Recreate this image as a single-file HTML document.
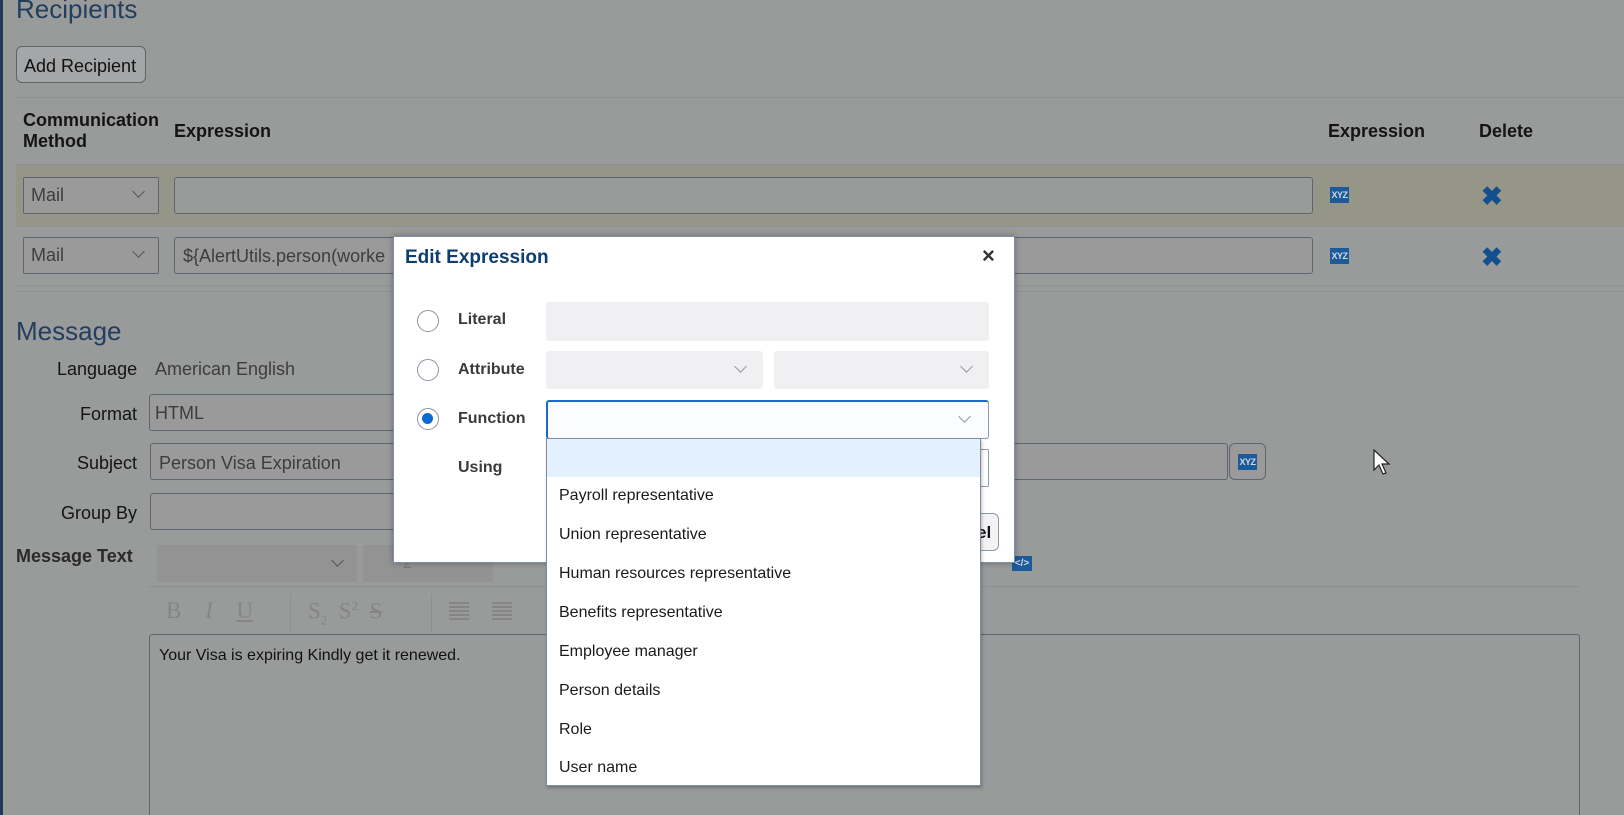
<!DOCTYPE html>
<html><head><meta charset="utf-8"><style>
*{box-sizing:border-box;margin:0;padding:0}
html,body{width:1624px;height:815px;overflow:hidden}
body{background:#999a9a;font-family:"Liberation Sans",Arial,sans-serif;position:relative;color:#111}
.a{position:absolute}
.lbl{font-size:18px;color:#141414}
.inp{position:absolute;border:1px solid #5d6670;border-radius:3px;background:#9a9a9a}
.sel{position:absolute;border:1px solid #5d6670;border-radius:2px;background:#9a9a9a;font-size:18px;color:#3d3d3d;padding:7px 0 0 7px}
.chev{position:absolute;width:9px;height:9px;border-right:1.5px solid #555;border-bottom:1.5px solid #555;transform:rotate(45deg)}
.xyz{position:absolute;width:19px;height:16px;background:#1d5a9a;color:#cfd8e6;font-size:9px;font-weight:bold;text-align:center;line-height:16px;letter-spacing:-0.5px}
.del{position:absolute;font-size:26px;font-weight:bold;color:#124f8e;line-height:1}
.dlg{position:absolute;left:393px;top:236px;width:622px;height:327px;background:#fff;border:1px solid #7a8ea6;box-shadow:0 0 6px rgba(0,0,0,.3)}
.rad{position:absolute;width:22px;height:22px;border:1.5px solid #8a96a3;border-radius:50%;background:#fff}
.dl{position:absolute;font-size:16px;font-weight:bold;color:#3b3b3b}
.gf{position:absolute;background:#f0f0f2;border-radius:3px}
.item{position:absolute;left:12px;font-size:16px;color:#1a1a1a}
</style></head><body>
<div class="a" style="left:0;top:0;width:3px;height:815px;background:#1f3a5a"></div>
<div class="a" style="left:16px;top:-6px;font-size:26px;color:#233f5f">Recipients</div>
<div class="a" style="left:16px;top:46px;width:130px;height:37px;border:1px solid #5f646a;border-radius:6px;background:#a5a6a7;font-size:18px;padding:9px 0 0 7px;color:#111">Add Recipient</div>
<div class="a" style="left:16px;top:97px;width:1608px;height:1px;background:#8a9097"></div>
<div class="a lbl" style="left:23px;top:110px;font-weight:bold;line-height:21px">Communication<br>Method</div>
<div class="a lbl" style="left:174px;top:121px;font-weight:bold">Expression</div>
<div class="a lbl" style="left:1328px;top:121px;font-weight:bold">Expression</div>
<div class="a lbl" style="left:1479px;top:121px;font-weight:bold">Delete</div>
<div class="a" style="left:16px;top:164px;width:1608px;height:62px;background:#959588;border-top:1px solid #8a9097"></div>
<div class="sel" style="left:23px;top:177px;width:136px;height:37px">Mail<div class="chev" style="left:110px;top:9px"></div></div>
<div class="inp" style="left:174px;top:177px;width:1139px;height:37px;background:#999a9a"></div>
<div class="xyz" style="left:1330px;top:187px">XYZ</div>
<div class="del" style="left:1481px;top:183px">✖</div>
<div class="a" style="left:16px;top:226px;width:1608px;height:1px;background:#8e9399"></div>
<div class="sel" style="left:23px;top:237px;width:136px;height:37px">Mail<div class="chev" style="left:110px;top:9px"></div></div>
<div class="inp" style="left:174px;top:237px;width:1139px;height:37px;font-size:18px;color:#3d3d3d;padding:8px 0 0 8px">${AlertUtils.person(worke</div>
<div class="xyz" style="left:1330px;top:248px">XYZ</div>
<div class="del" style="left:1481px;top:244px">✖</div>
<div class="a" style="left:16px;top:285px;width:1608px;height:1px;background:#8e9399"></div>
<div class="a" style="left:16px;top:291px;width:1608px;height:1px;background:#8e9399"></div>
<div class="a" style="left:16px;top:316px;font-size:26px;color:#233f5f">Message</div>
<div class="a lbl" style="left:57px;top:359px">Language</div>
<div class="a" style="left:155px;top:359px;font-size:18px;color:#3d3d3d">American English</div>
<div class="a lbl" style="left:80px;top:404px">Format</div>
<div class="inp" style="left:149px;top:394px;width:260px;height:37px;font-size:18px;color:#3d3d3d;padding:8px 0 0 5px">HTML</div>
<div class="a lbl" style="left:77px;top:453px">Subject</div>
<div class="inp" style="left:150px;top:443px;width:1078px;height:37px;font-size:18px;color:#3d3d3d;padding:9px 0 0 8px">Person Visa Expiration</div>
<div class="a" style="left:1229px;top:443px;width:37px;height:37px;border:1px solid #5d6670;border-radius:6px;background:#9a9a9a"><div class="xyz" style="left:8px;top:10px">XYZ</div></div>
<div class="a lbl" style="left:61px;top:503px">Group By</div>
<div class="inp" style="left:150px;top:493px;width:260px;height:37px"></div>
<div class="a lbl" style="left:16px;top:546px;font-weight:bold;color:#2a2a2a">Message Text</div>
<div class="a" style="left:157px;top:545px;width:200px;height:37px;background:#939393;border-radius:2px"><div class="chev" style="left:176px;top:11px;border-color:#555"></div></div>
<div class="a" style="left:363px;top:545px;width:130px;height:37px;background:#939393;border-radius:2px;color:#777;font-size:16px;padding:10px 0 0 40px">2</div>
<div class="a" style="left:149px;top:586px;width:1431px;height:1px;background:#8a9097"></div>
<div class="a" style="left:166px;top:598px;font-size:23px;color:#858585;font-family:'Liberation Serif',serif;word-spacing:18px">B <i>I</i> <u>U</u></div>
<div class="a" style="left:290px;top:594px;width:1px;height:38px;background:#8a9097"></div>
<div class="a" style="left:308px;top:598px;font-size:23px;color:#858585;font-family:'Liberation Serif',serif">S<sub style="font-size:13px">2</sub>&nbsp;&nbsp;S<sup style="font-size:13px">2</sup>&nbsp;&nbsp;<s>S</s></div>
<div class="a" style="left:431px;top:594px;width:1px;height:38px;background:#8a9097"></div>
<div class="a" style="left:449px;top:602px;width:20px;height:18px;background:repeating-linear-gradient(#858585 0 2px,transparent 2px 4px)"></div>
<div class="a" style="left:492px;top:602px;width:20px;height:18px;background:repeating-linear-gradient(#858585 0 2px,transparent 2px 4px)"></div>
<div class="a" style="left:1012px;top:556px;width:20px;height:15px;background:#1d5a9a;color:#cfd8e6;font-size:10px;font-weight:bold;text-align:center;line-height:15px">&lt;/&gt;</div>
<div class="inp" style="left:149px;top:634px;width:1431px;height:181px;border-bottom:none;border-radius:3px 3px 0 0;background:#999a9a;font-size:16px;color:#111;padding:12px 0 0 9px">Your Visa is expiring Kindly get it renewed.</div>
<svg class="a" style="left:1373px;top:449px" width="20" height="28" viewBox="0 0 20 28"><path d="M1 1 L1 21 L6 16 L10 25 L13 24 L9 15 L16 15 Z" fill="#fff" stroke="#222" stroke-width="1.2"/></svg>
<div class="dlg">
<div class="a" style="left:11px;top:10px;font-size:19px;font-weight:bold;color:#0e3e6e">Edit Expression</div>
<div class="a" style="left:588px;top:6px;font-size:22px;font-weight:bold;color:#333">×</div>
<div class="rad" style="left:23px;top:73px"></div>
<div class="dl" style="left:64px;top:74px">Literal</div>
<div class="gf" style="left:152px;top:65px;width:443px;height:39px"></div>
<div class="rad" style="left:23px;top:122px"></div>
<div class="dl" style="left:64px;top:124px">Attribute</div>
<div class="gf" style="left:152px;top:114px;width:217px;height:38px"><div class="chev" style="left:190px;top:11px;border-color:#999"></div></div>
<div class="gf" style="left:380px;top:114px;width:215px;height:38px"><div class="chev" style="left:188px;top:11px;border-color:#999"></div></div>
<div class="rad" style="left:23px;top:171px"><div class="a" style="left:4px;top:4px;width:11px;height:11px;border-radius:50%;background:#0a6bd1"></div></div>
<div class="dl" style="left:64px;top:173px">Function</div>
<div class="a" style="left:152px;top:163px;width:443px;height:39px;border:1px solid #8a9aa8;border-top:2px solid #1a68d0;border-left:2px solid #1a68d0;border-radius:3px;background:#fbfcfe"><div class="chev" style="left:412px;top:10px;border-color:#999"></div></div>
<div class="dl" style="left:64px;top:222px">Using</div>
<div class="a" style="left:560px;top:212px;width:35px;height:38px;border:1px solid #8a9aa8;border-radius:2px"></div>
<div class="a" style="left:530px;top:276px;width:75px;height:38px;border:1px solid #8a9aa8;border-radius:6px;background:#f3f3f3;font-size:17px;font-weight:bold;padding:9px 0 0 52px">el</div>
</div>
<div class="a" style="left:546px;top:438px;width:435px;height:348px;background:#fff;border:1px solid #7a8ea6;box-shadow:1px 2px 3px rgba(0,0,0,.25)">
<div class="a" style="left:0;top:0;width:433px;height:38px;background:#e3f0fd"></div>
<div class="item" style="top:48px">Payroll representative</div>
<div class="item" style="top:87px">Union representative</div>
<div class="item" style="top:126px">Human resources representative</div>
<div class="item" style="top:165px">Benefits representative</div>
<div class="item" style="top:204px">Employee manager</div>
<div class="item" style="top:243px">Person details</div>
<div class="item" style="top:282px">Role</div>
<div class="item" style="top:320px">User name</div>
</div>
</body></html>
